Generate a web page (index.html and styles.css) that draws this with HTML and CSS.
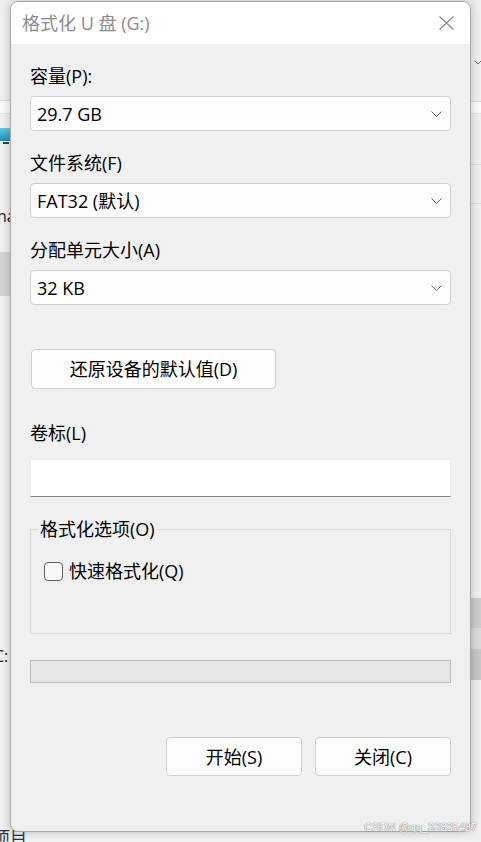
FILE: index.html
```html
<!DOCTYPE html>
<html lang="zh-CN">
<head>
<meta charset="utf-8">
<title>格式化 U 盘 (G:)</title>
<link rel="stylesheet" href="styles.css">
</head>
<body>
<div class="desktop">
  <div class="side side-left">
    <div class="l-top"></div>
    <div class="l-row"></div>
    <div class="pc-icon"><span class="screen"></span><span class="stand"></span></div>
    <div class="l-text l-na">na</div>
    <div class="l-sel"></div>
    <div class="l-text l-drive">C:</div>
    <div class="l-foot">项目</div>
  </div>
  <div class="side side-right">
    <svg class="r-chev" width="8" height="5" viewBox="0 0 8 5"><polyline points="0.5,0.5 4,4 7.5,0.5" fill="none" stroke="#666" stroke-width="1"/></svg>
    <div class="r-line r-line1"></div>
    <div class="r-band"></div>
    <div class="r-line r-line2"></div>
    <div class="r-line r-line3"></div>
    <div class="r-blk r-blk1"></div>
    <div class="r-blk r-blk2"></div>
    <div class="r-blk r-blk3"></div>
  </div>
</div>

<div class="dialog">
  <div class="titlebar">
    <span class="title">格式化 U 盘 (G:)</span>
    <svg class="close" width="15" height="14" viewBox="0 0 15 14"><path d="M0.5 0.5 L14.5 13.5 M14.5 0.5 L0.5 13.5" fill="none" stroke="#8a8a8a" stroke-width="1.2"/></svg>
  </div>
  <div class="content">
    <div class="lbl">容量(P):</div>
    <div class="combo"><span>29.7 GB</span><svg class="chev" width="11" height="6" viewBox="0 0 11 6"><polyline points="0.5,0.5 5.5,5.5 10.5,0.5" fill="none" stroke="#5c5c5c" stroke-width="1"/></svg></div>

    <div class="lbl gap">文件系统(F)</div>
    <div class="combo"><span>FAT32 (默认)</span><svg class="chev" width="11" height="6" viewBox="0 0 11 6"><polyline points="0.5,0.5 5.5,5.5 10.5,0.5" fill="none" stroke="#5c5c5c" stroke-width="1"/></svg></div>

    <div class="lbl gap">分配单元大小(A)</div>
    <div class="combo"><span>32 KB</span><svg class="chev" width="11" height="6" viewBox="0 0 11 6"><polyline points="0.5,0.5 5.5,5.5 10.5,0.5" fill="none" stroke="#5c5c5c" stroke-width="1"/></svg></div>

    <button class="btn btn-reset">还原设备的默认值(D)</button>

    <div class="lbl lbl-vol">卷标(L)</div>
    <div class="textbox"></div>

    <fieldset class="group">
      <legend>格式化选项(O)</legend>
      <label class="check"><input type="checkbox" class="chk"><span>快速格式化(Q)</span></label>
    </fieldset>

    <div class="progress"></div>

    <div class="actions">
      <button class="btn btn-act">开始(S)</button>
      <button class="btn btn-act">关闭(C)</button>
    </div>
  </div>
</div>

<div class="watermark">CSDN @qq_33835487</div>
</body>
</html>
```

FILE: styles.css
```css
html, body {
  margin: 0;
  padding: 0;
}
body {
  background: #f1f1f1;
  font-family: "Open Sans", "Noto Sans CJK SC", sans-serif;
  color: #000;
  overflow: hidden;
  height: 842px;
}

/* background window remnants */
.desktop {
  display: flex;
  justify-content: space-between;
  height: 842px;
}
.side {
  width: 10px;
  display: flex;
  flex-direction: column;
  background: #efefef;
  overflow: visible;
}
.l-top { height: 100px; flex: none; border-bottom: 1px solid #d8d8d8; }
.l-row { height: 12px; flex: none; background: #fafafa; border-bottom: 1px solid #e2e2e2; }
.pc-icon { margin-top: 14px; display: flex; flex-direction: column; flex: none; }
.pc-icon .screen { height: 13px; background: linear-gradient(#5fcbe8, #1a8fb8); }
.pc-icon .stand { height: 2px; margin: 1px 1px 0 3px; background: #3d3d3d; }
.l-text {
  font-size: 16px;
  line-height: 20px;
  height: 20px;
  white-space: nowrap;
  color: #1b1b1b;
  flex: none;
}
.l-na { margin-top: 62px; margin-left: -3px; }
.l-sel { margin-top: 26px; height: 44px; flex: none; background: #d3d3d3; }
.l-drive { margin-top: 350px; margin-left: -6px; }
.l-foot {
  margin-top: 161px;
  margin-left: -7px;
  font-family: "Noto Sans CJK SC", sans-serif;
  font-size: 17px;
  line-height: 20px;
  white-space: nowrap;
  color: #23334d;
  flex: none;
}
.r-chev { display: block; margin-top: 60px; margin-left: 3px; flex: none; }
.r-line { height: 0; border-top: 1px solid #dadada; flex: none; }
.r-line1 { margin-top: 36px; }
.r-band { height: 11px; flex: none; background: #fafafa; border-bottom: 1px solid #e0e0e0; }
.r-line2 { margin-top: 50px; }
.r-line3 { margin-top: 38px; }
.r-blk { flex: none; }
.r-blk1 { margin-top: 394px; height: 30px; background: #cbcbcb; }
.r-blk2 { height: 21px; background: #d9d9d9; }
.r-blk3 { height: 31px; background: #c6c6c6; }

/* dialog window */
.dialog {
  position: absolute;
  left: 10px;
  top: 1px;
  width: 461px;
  height: 831px;
  box-sizing: border-box;
  border: 1px solid #a8a8a8;
  border-radius: 8px;
  overflow: hidden;
  display: flex;
  flex-direction: column;
  background: #f0f0f0;
  box-shadow: 0 0 10px rgba(0, 0, 0, 0.22);
  z-index: 2;
}
.titlebar {
  height: 42px;
  flex: none;
  background: #ffffff;
  display: flex;
  align-items: center;
  justify-content: space-between;
  padding: 0 16px 0 11px;
}
.title {
  font-size: 18px;
  line-height: 24px;
  color: #8c8c8c;
  white-space: nowrap;
}
.close { display: block; }

.content {
  flex: 1;
  display: flex;
  flex-direction: column;
  padding: 20px 19px 0 19px;
  font-size: 18px;
}
.lbl {
  line-height: 24px;
  height: 24px;
  white-space: nowrap;
}
.lbl.gap { margin-top: 20px; }
.lbl-vol { margin-top: 32px; }

.combo {
  margin-top: 8px;
  height: 35px;
  box-sizing: border-box;
  border: 1px solid #d0d0d0;
  border-radius: 4px;
  background: #fdfdfd;
  display: flex;
  align-items: center;
  justify-content: space-between;
  padding: 0 8px 0 6px;
  line-height: 24px;
}
.chev { display: block; }

.btn {
  font-family: inherit;
  font-size: 18px;
  color: #000;
  background: #fdfdfd;
  border: 1px solid #cfcfcf;
  border-radius: 4px;
  box-sizing: border-box;
  padding: 0;
  line-height: 24px;
}
.btn-reset {
  margin-top: 44px;
  margin-left: 1px;
  width: 245px;
  height: 40px;
  align-self: flex-start;
}

.textbox {
  margin-top: 14px;
  height: 38px;
  box-sizing: border-box;
  background: #ffffff;
  border: 1px solid #ececec;
  border-bottom: 1px solid #858585;
}

.group {
  margin: 20px 0 0 0;
  padding: 18px 0 50px 0;
  border: 1px solid #dadada;
  min-inline-size: 0;
}
.group legend {
  margin-left: 7px;
  padding: 0 2px;
  line-height: 24px;
  font-size: 18px;
}
.check {
  display: flex;
  align-items: center;
  margin-left: 13px;
  height: 24px;
  line-height: 24px;
}
.chk {
  appearance: none;
  -webkit-appearance: none;
  margin: 0;
  width: 19px;
  height: 19px;
  box-sizing: border-box;
  border: 1px solid #5e5e5e;
  border-radius: 4px;
  background: #f8f8f8;
  flex: none;
}
.check span { margin-left: 6px; }

.progress {
  margin-top: 26px;
  height: 23px;
  box-sizing: border-box;
  background: #e6e6e6;
  border: 1px solid #bcbcbc;
}

.actions {
  margin-top: 54px;
  display: flex;
  justify-content: flex-end;
  gap: 13px;
}
.btn-act {
  width: 136px;
  height: 39px;
}

.watermark {
  position: absolute;
  right: 4px;
  bottom: 8px;
  font-family: "Liberation Sans", sans-serif;
  font-size: 11px;
  line-height: 13px;
  color: #ffffff;
  text-shadow: 0 0 1px #777, 0 0 1px #777;
  z-index: 3;
  white-space: nowrap;
}
```
